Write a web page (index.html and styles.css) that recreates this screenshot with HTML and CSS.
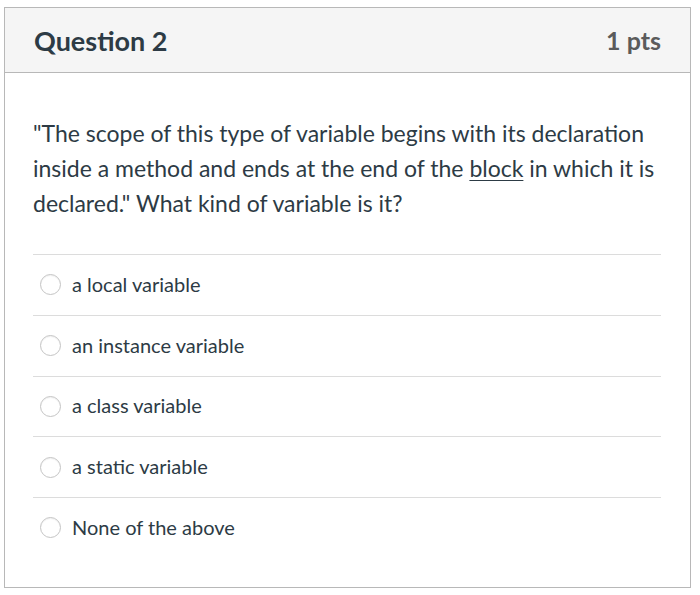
FILE: index.html
```html
<!DOCTYPE html>
<html>
<head>
<meta charset="utf-8">
<link rel="stylesheet" href="styles.css">
</head>
<body>
<div class="card">
  <div class="header">
    <h2 class="title">Question 2</h2>
    <div class="pts">1 pts</div>
  </div>
  <div class="content">
    <p class="question-text">"The scope of this type of variable begins with its declaration inside a method and ends at the end of the <u>block</u> in which it is declared." What kind of variable is it?</p>
    <div class="answers">
      <label class="answer"><span class="radio"></span><span class="label">a local variable</span></label>
      <label class="answer"><span class="radio"></span><span class="label">an instance variable</span></label>
      <label class="answer"><span class="radio"></span><span class="label">a class variable</span></label>
      <label class="answer"><span class="radio"></span><span class="label">a static variable</span></label>
      <label class="answer"><span class="radio"></span><span class="label">None of the above</span></label>
    </div>
  </div>
</div>
</body>
</html>
```

FILE: styles.css
```css
html, body {
  margin: 0;
  padding: 0;
  background: #ffffff;
}
body {
  font-family: Lato, "Open Sans", sans-serif;
  color: #2d3b45;
}
.card {
  margin: 7px 0 0 4px;
  width: 687px;
  height: 581px;
  box-sizing: border-box;
  border: 1px solid #b8b8b8;
  display: flex;
  flex-direction: column;
}
.header {
  height: 65px;
  box-sizing: border-box;
  background: #f5f5f5;
  border-bottom: 1px solid #b8b8b8;
  display: flex;
  align-items: center;
  justify-content: space-between;
  padding: 0 29px 0 29px;
}
.title {
  margin: 0;
  font-size: 27px;
  font-weight: 700;
  color: #2d3b45;
}
.pts {
  font-size: 25px;
  font-weight: 700;
  color: #5b5b5b;
}
.content {
  padding: 43px 29px 0 28px;
}
.question-text {
  margin: 0;
  font-size: 23px;
  line-height: 35px;
  color: #2d3b45;
}
.question-text u {
  text-decoration-thickness: 1px;
  text-underline-offset: 3px;
}
.answers {
  margin-top: 33px;
}
.answer {
  display: flex;
  align-items: center;
  height: 59.75px;
  box-sizing: content-box;
  border-top: 1px solid #dcdcdc;
  padding-left: 7px;
}
.radio {
  width: 19px;
  height: 19px;
  border-radius: 50%;
  border: 1px solid #c4c4c4;
  box-shadow: inset 0 1px 1px rgba(0,0,0,0.06);
  background: #fff;
  flex: none;
}
.label {
  margin-left: 11px;
  font-size: 20px;
  color: #2d3b45;
  position: relative;
  top: -1px;
}
```
